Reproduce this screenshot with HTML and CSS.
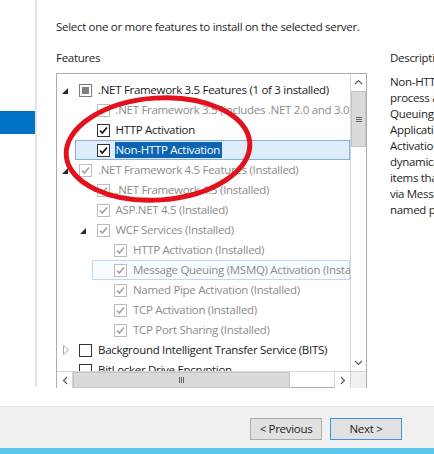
FILE: index.html
```html
<!DOCTYPE html>
<html>
<head>
<meta charset="utf-8">
<link rel="stylesheet" href="styles.css">
</head>
<body>
<div class="page">
  <div class="main">
    <nav class="nav"><div class="nav-selected"></div></nav>
    <section class="content">
      <p class="intro">Select one or more features to install on the selected server.</p>
      <div class="columns">
        <div class="features-col">
          <h2 class="label">Features</h2>
          <div class="treebox">
            <div class="tree-area">
              <div class="tree">
                <div class="row l0"><span class="exp"><svg class="arr" width="6" height="6" viewBox="0 0 6 6"><polygon points="6,0 6,6 0,6"/></svg></span><span class="cb ind"><span class="ind-fill"></span></span><span class="txt">.NET Framework 3.5 Features (1 of 3 installed)</span></div>
                <div class="row l1"><span class="exp"></span><span class="cb dis"><svg class="chk" viewBox="0 0 11 11"><path d="M2 5.5 L4.3 8 L9 2.5"/></svg></span><span class="txt dis">.NET Framework 3.5 (includes .NET 2.0 and 3.0)</span></div>
                <div class="row l1"><span class="exp"></span><span class="cb"><svg class="chk" viewBox="0 0 11 11"><path d="M2 5.5 L4.3 8 L9 2.5"/></svg></span><span class="txt">HTTP Activation</span></div>
                <div class="row l1 sel"><span class="exp"></span><span class="cb"><svg class="chk" viewBox="0 0 11 11"><path d="M2 5.5 L4.3 8 L9 2.5"/></svg></span><span class="txt seltxt">Non-HTTP Activation</span></div>
                <div class="row l0"><span class="exp"><svg class="arr" width="6" height="6" viewBox="0 0 6 6"><polygon points="6,0 6,6 0,6"/></svg></span><span class="cb dis"><svg class="chk" viewBox="0 0 11 11"><path d="M2 5.5 L4.3 8 L9 2.5"/></svg></span><span class="txt dis">.NET Framework 4.5 Features (Installed)</span></div>
                <div class="row l1"><span class="exp"></span><span class="cb dis"><svg class="chk" viewBox="0 0 11 11"><path d="M2 5.5 L4.3 8 L9 2.5"/></svg></span><span class="txt dis">.NET Framework 4.5 (Installed)</span></div>
                <div class="row l1"><span class="exp"></span><span class="cb dis"><svg class="chk" viewBox="0 0 11 11"><path d="M2 5.5 L4.3 8 L9 2.5"/></svg></span><span class="txt dis">ASP.NET 4.5 (Installed)</span></div>
                <div class="row l1"><span class="exp"><svg class="arr" width="6" height="6" viewBox="0 0 6 6"><polygon points="6,0 6,6 0,6"/></svg></span><span class="cb dis"><svg class="chk" viewBox="0 0 11 11"><path d="M2 5.5 L4.3 8 L9 2.5"/></svg></span><span class="txt dis">WCF Services (Installed)</span></div>
                <div class="row l2"><span class="exp"></span><span class="cb dis"><svg class="chk" viewBox="0 0 11 11"><path d="M2 5.5 L4.3 8 L9 2.5"/></svg></span><span class="txt dis">HTTP Activation (Installed)</span></div>
                <div class="row l2 hov"><span class="exp"></span><span class="cb dis"><svg class="chk" viewBox="0 0 11 11"><path d="M2 5.5 L4.3 8 L9 2.5"/></svg></span><span class="txt dis">Message Queuing (MSMQ) Activation (Installed)</span></div>
                <div class="row l2"><span class="exp"></span><span class="cb dis"><svg class="chk" viewBox="0 0 11 11"><path d="M2 5.5 L4.3 8 L9 2.5"/></svg></span><span class="txt dis">Named Pipe Activation (Installed)</span></div>
                <div class="row l2"><span class="exp"></span><span class="cb dis"><svg class="chk" viewBox="0 0 11 11"><path d="M2 5.5 L4.3 8 L9 2.5"/></svg></span><span class="txt dis">TCP Activation (Installed)</span></div>
                <div class="row l2"><span class="exp"></span><span class="cb dis"><svg class="chk" viewBox="0 0 11 11"><path d="M2 5.5 L4.3 8 L9 2.5"/></svg></span><span class="txt dis">TCP Port Sharing (Installed)</span></div>
                <div class="row l0"><span class="exp"><svg class="arr-c" width="6" height="10" viewBox="0 0 6 10"><polygon points="0.5,0.5 5.5,5 0.5,9.5"/></svg></span><span class="cb"></span><span class="txt">Background Intelligent Transfer Service (BITS)</span></div>
                <div class="row l0"><span class="exp"></span><span class="cb"></span><span class="txt">BitLocker Drive Encryption</span></div>
              </div>
              <div class="vscroll">
                <div class="sb-btn"><svg width="9" height="6" viewBox="0 0 9 6"><polyline points="1,5 4.5,1.5 8,5"/></svg></div>
                <div class="vthumb"><span class="grip-h"></span><span class="grip-h"></span><span class="grip-h"></span></div>
                <div class="vtrack"></div>
                <div class="sb-btn"><svg width="9" height="6" viewBox="0 0 9 6"><polyline points="1,1 4.5,4.5 8,1"/></svg></div>
              </div>
            </div>
            <div class="hscroll">
              <div class="sb-btn h"><svg width="6" height="9" viewBox="0 0 6 9"><polyline points="5,1 1.5,4.5 5,8"/></svg></div>
              <div class="hthumb"><span class="grip-v"></span><span class="grip-v"></span><span class="grip-v"></span></div>
              <div class="htrack"></div>
              <div class="sb-btn h"><svg width="6" height="9" viewBox="0 0 6 9"><polyline points="1,1 4.5,4.5 1,8"/></svg></div>
              <div class="corner"></div>
            </div>
          </div>
        </div>
        <div class="desc-col">
          <h2 class="label">Description</h2>
          <p class="desc">Non-HTTP Activation supports<br>process activation via Message<br>Queuing, TCP and named pipes.<br>Applications that use Non-HTTP<br>Activation can start and stop<br>dynamically in response to work<br>items that arrive over the network<br>via Message Queuing, TCP and<br>named pipes.</p>
        </div>
      </div>
    </section>
  </div>
  <footer class="footer">
    <button class="btn">&lt; Previous</button>
    <button class="btn default">Next &gt;</button>
    <button class="btn install">Install</button>
  </footer>
  <div class="taskbar"></div>
  <svg class="annotation" width="434" height="454" viewBox="0 0 434 454">
    <ellipse cx="158" cy="149" rx="92" ry="51" transform="rotate(-4 158 149)" fill="none" stroke="#e2111c" stroke-width="5"/>
  </svg>
</div>
</body>
</html>
```
FILE: styles.css
```css
html, body {
  margin: 0;
  padding: 0;
}
body {
  width: 434px;
  height: 454px;
  overflow: hidden;
  background: #fff;
  font-family: "Open Sans", "Noto Sans", "DejaVu Sans", sans-serif;
  font-size: 11.5px;
  letter-spacing: -0.3px;
  color: #1e1e1e;
}
.page {
  position: relative;
  width: 434px;
  height: 454px;
  display: flex;
  flex-direction: column;
  overflow: hidden;
}
.main {
  height: 406px;
  display: flex;
  flex: none;
}
.nav {
  width: 35px;
  height: 387px;
  border-right: 2px solid #e4e4e4;
  flex: none;
}
.nav-selected {
  margin-top: 111px;
  height: 23px;
  width: 35px;
  background: #0072c6;
}
.content {
  flex: 1;
  min-width: 0;
  padding: 19px 0 0 19px;
  overflow: hidden;
}
.intro {
  margin: 0;
  line-height: 16px;
  white-space: nowrap;
  color: #262626;
}
.columns {
  display: flex;
  gap: 23px;
  margin-top: 15px;
}
.label {
  margin: 0;
  font-size: 11.5px;
  font-weight: normal;
  line-height: 16px;
  color: #1e1e1e;
  white-space: nowrap;
}
.features-col {
  width: 311px;
  flex: none;
}
.treebox {
  margin-top: 7px;
  height: 315px;
  box-sizing: border-box;
  border: 1px solid #abadb3;
  display: flex;
  flex-direction: column;
}
.tree-area {
  height: 297px;
  display: flex;
  flex: none;
}
.tree {
  flex: 1;
  min-width: 0;
  overflow: hidden;
  padding-top: 6px;
}
.row {
  height: 20px;
  box-sizing: border-box;
  border: 1px solid transparent;
  padding-left: 3px;
  display: flex;
  align-items: center;
  white-space: nowrap;
}
.l1 { margin-left: 17.5px; }
.l2 { margin-left: 35px; }
.row.sel {
  background: #deecfb;
  border-color: #84b0e2;
}
.row.hov {
  background: #f7fbff;
  border-color: #bcd8f7;
}
.exp {
  width: 18px;
  height: 18px;
  flex: none;
  display: flex;
  align-items: center;
  padding-left: 1px;
  box-sizing: border-box;
}
.arr { fill: #2a2a2a; margin-top: 1px; }
.arr-c { fill: none; stroke: #a8a8a8; stroke-width: 1; margin-left: 1px; }
.cb {
  width: 13px;
  height: 13px;
  box-sizing: border-box;
  border: 1px solid #333;
  background: #fff;
  flex: none;
  margin-right: 5px;
  display: flex;
  align-items: center;
  justify-content: center;
}
.cb.dis { border-color: #bdbdbd; }
.cb.ind { border-color: #7a7a7a; }
.ind-fill {
  width: 7px;
  height: 7px;
  background: #808080;
}
.chk {
  width: 11px;
  height: 11px;
  fill: none;
  stroke: #111;
  stroke-width: 1.7;
}
.cb.dis .chk { stroke: #a3a3a3; }
.txt {
  line-height: 16px;
  padding: 0 2px 0 1px;
  color: #1a1a1a;
}
.txt.dis { color: #8c8c8c; }
.txt.seltxt {
  background: #0c65b3;
  color: #fff;
}
.vscroll {
  width: 15px;
  flex: none;
  border-left: 1px solid #d6d6d6;
  display: flex;
  flex-direction: column;
  background: #fff;
}
.sb-btn {
  height: 16px;
  flex: none;
  display: flex;
  align-items: center;
  justify-content: center;
  background: #fff;
}
.sb-btn svg { fill: none; stroke: #606060; stroke-width: 1.2; }
.vthumb {
  margin: 1px 0 0 0;
  height: 56px;
  box-sizing: border-box;
  background: #dadada;
  border: 1px solid #c4c4c4;
  flex: none;
  display: flex;
  flex-direction: column;
  align-items: center;
  justify-content: center;
  gap: 1px;
}
.grip-h { width: 6px; height: 1px; background: #606060; }
.vtrack { flex: 1; }
.hscroll {
  height: 16px;
  flex: none;
  border-top: 1px solid #d6d6d6;
  display: flex;
}
.sb-btn.h {
  width: 16px;
  height: 16px;
  box-sizing: border-box;
  border-right: 1px solid #d6d6d6;
}
.sb-btn.h:nth-child(4) {
  border-right: none;
  border-left: 1px solid #d6d6d6;
}
.hthumb {
  width: 217px;
  flex: none;
  box-sizing: border-box;
  background: #dadada;
  border: 1px solid #c4c4c4;
  display: flex;
  align-items: center;
  justify-content: center;
  gap: 1px;
}
.grip-v { width: 1px; height: 6px; background: #606060; }
.htrack { flex: 1; }
.corner {
  width: 16px;
  flex: none;
  background: #f0f0f0;
  border-left: 1px solid #d6d6d6;
  box-sizing: border-box;
}
.desc-col {
  flex: none;
  width: 200px;
}
.desc {
  margin: 8px 0 0 0;
  line-height: 16px;
  white-space: nowrap;
  color: #1e1e1e;
}
.footer {
  height: 42px;
  flex: none;
  box-sizing: border-box;
  background: #f0f0f0;
  border-top: 1px solid #e8e8e8;
  padding: 11px 0 0 250px;
  display: flex;
  align-items: flex-start;
  gap: 8px;
}
.btn {
  width: 72px;
  height: 22px;
  flex: none;
  box-sizing: border-box;
  border: 1px solid #adadad;
  background: #e1e1e1;
  font-family: inherit;
  font-size: 11.5px;
  letter-spacing: -0.3px;
  color: #1e1e1e;
  padding: 0;
  line-height: 18px;
}
.btn.default { border-color: #3c93e3; }
.btn.install { margin-left: 24px; }
.taskbar {
  height: 6px;
  flex: none;
  background: #5ac6ec;
}
.annotation {
  position: absolute;
  left: 0;
  top: 0;
  pointer-events: none;
}
```
